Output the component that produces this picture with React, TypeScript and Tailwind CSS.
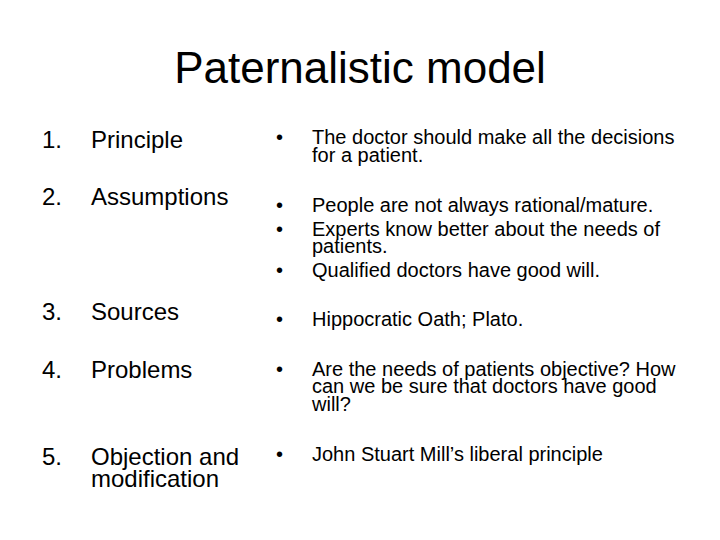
const topics = [
  { num: '1.', label: 'Principle', gap: 'mt-0' },
  { num: '2.', label: 'Assumptions', gap: 'mt-[35px]' },
  { num: '3.', label: 'Sources', gap: 'mt-[93px]' },
  { num: '4.', label: 'Problems', gap: 'mt-[36px]' },
  { num: '5.', label: 'Objection and modification', gap: 'mt-[65px]' },
]

const points = [
  { gap: 'mt-0', items: ['The doctor should make all the decisions for a patient.'] },
  {
    gap: 'mt-[33px]',
    items: [
      'People are not always rational/mature.',
      'Experts know better about the needs of patients.',
      'Qualified doctors have good will.',
    ],
  },
  { gap: 'mt-[32px]', items: ['Hippocratic Oath; Plato.'] },
  {
    gap: 'mt-[32px]',
    items: ['Are the needs of patients objective? How can we be sure that doctors have good will?'],
  },
  { gap: 'mt-[33px]', items: ['John Stuart Mill\u2019s liberal principle'] },
]

export default function App() {
  return (
    <div className="w-[720px] h-[540px] bg-white text-black overflow-hidden font-['Liberation_Sans',Arial,sans-serif]">
      <h1 className="pt-[46px] text-center text-[44px] leading-[44px] font-normal">Paternalistic model</h1>

      <div className="mt-[39px] ml-[42px] flex">
        {/* 왼쪽: 번호 + 항목 */}
        <div className="w-[234px] shrink-0">
          {topics.map((t) => (
            <div key={t.num} className={`flex text-[24px] leading-[22px] ${t.gap}`}>
              <span className="w-[49px] shrink-0">{t.num}</span>
              <span className="w-[185px]">{t.label}</span>
            </div>
          ))}
        </div>

        {/* 오른쪽: 설명 */}
        <div className="w-[411px] shrink-0">
          {points.map((p, i) => (
            <div key={i} className={p.gap}>
              {p.items.map((text, j) => (
                <div key={j} className={`flex text-[20px] leading-[17.5px] ${j > 0 ? 'mt-[6px]' : ''}`}>
                  <span className="w-[36px] shrink-0">•</span>
                  <span className="w-[375px]">{text}</span>
                </div>
              ))}
            </div>
          ))}
        </div>
      </div>
    </div>
  )
}
